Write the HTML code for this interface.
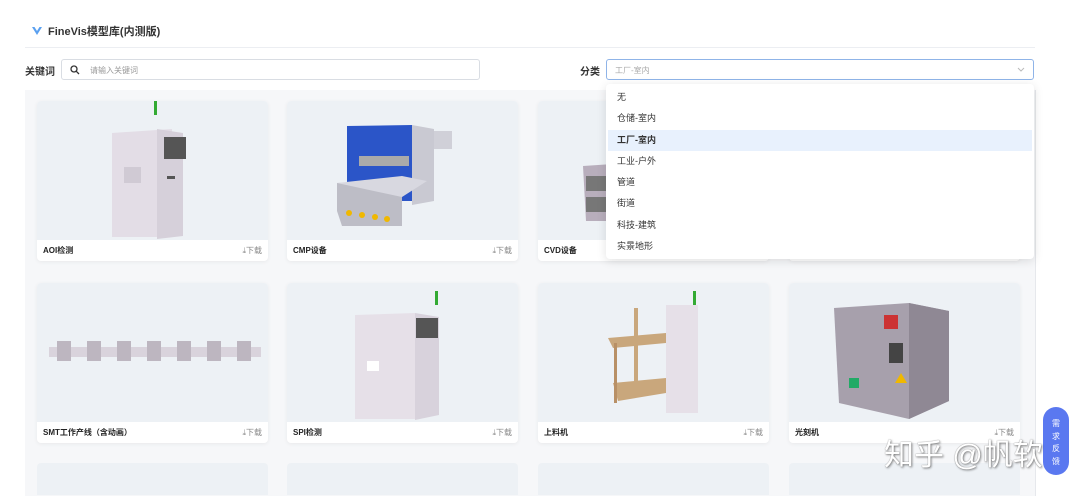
<!DOCTYPE html>
<html style="width:1080px;height:496px;overflow:hidden"><head><meta charset="utf-8">
<style>
*{margin:0;padding:0;box-sizing:border-box}
body{width:1080px;height:496px;overflow:hidden;background:#fff;font-family:"Liberation Sans","Noto Sans CJK SC",sans-serif;color:#222;position:relative}
.abs{position:absolute}
.hdr{left:32px;top:23px;font-size:11px;font-weight:bold;color:#333;display:flex;align-items:center;gap:6px}
.line{left:25px;top:47px;width:1010px;height:1px;background:#eceef2}
.lbl{font-size:10px;font-weight:bold;color:#333}
.inp{border:1px solid #d9dde3;border-radius:3px;height:21px;background:#fff}
.area{left:25px;top:90px;width:1010px;height:406px;background:#f6f7f9}
.vline{left:1035px;top:90px;width:1px;height:406px;background:#e6e8ec}
.card{position:absolute;width:231px;border-radius:4px;background:#fff;overflow:hidden;box-shadow:0 1px 4px rgba(0,0,0,.06)}
.img{height:139px;background:#edf1f5;position:relative}
.cap{height:21px;display:flex;align-items:center;justify-content:space-between;padding:0 6px;font-size:8px;font-weight:bold;color:#222}
.cap span{font-weight:normal;color:#888;font-size:8px}
.dd{left:606px;top:84px;width:428px;height:175px;background:#fff;border-radius:4px;box-shadow:0 2px 10px rgba(0,0,0,.12);padding-top:3px}
.dd div{height:21.3px;line-height:21.3px;padding-left:11px;font-size:9px;color:#333}
.dd .on{background:#e8f1fd;font-weight:bold;margin:0 2px;padding-left:9px}
.fb{left:1043px;top:407px;width:26px;height:68px;border-radius:13px;background:#5a78f0;color:#fff;font-size:8px;line-height:12.5px;text-align:center;padding-top:11px}
.wm{left:884px;top:430px;font-size:30px;color:#fff;text-shadow:1px 1px 2px rgba(0,0,0,.45),0 0 1px #777;letter-spacing:0}
.r3{position:absolute;top:463px;width:231px;height:32px;border-radius:4px 4px 0 0;background:#edf1f5}
</style></head><body>
<div class="abs hdr"><svg width="10" height="9" viewBox="0 0 10 9"><path d="M0 0L5 8L10 0L7.5 0L5 4L2.5 0Z" fill="#5aa0f0"/></svg>FineVis模型库(内测版)</div>
<div class="abs line"></div>
<div class="abs lbl" style="left:25px;top:63px">关键词</div>
<div class="abs inp" style="left:61px;top:59px;width:419px"><svg style="position:absolute;left:8px;top:5px" width="10" height="10" viewBox="0 0 10 10"><circle cx="4" cy="4" r="3" fill="none" stroke="#333" stroke-width="1.3"/><path d="M6.3 6.3L9 9" stroke="#333" stroke-width="1.3"/></svg><span style="position:absolute;left:28px;top:5px;font-size:8px;color:#999">请输入关键词</span></div>
<div class="abs lbl" style="left:580px;top:63px">分类</div>
<div class="abs inp" style="left:606px;top:59px;width:428px;border-color:#8fb4e8"><span style="position:absolute;left:8px;top:5px;font-size:8px;color:#aaa">工厂-室内</span><svg style="position:absolute;right:8px;top:7px" width="8" height="6" viewBox="0 0 8 6"><path d="M1 1L4 4L7 1" fill="none" stroke="#bbb"/></svg></div>
<div class="abs area"></div>
<div class="abs vline"></div>

<div class="card" style="left:37px;top:101px"><div class="img">
<svg width="231" height="139"><rect x="117" y="0" width="3" height="14" fill="#3a3"/><path d="M75 32L135 28L135 136L75 136Z" fill="#e3dde6"/><path d="M120 28L146 32L146 135L120 138Z" fill="#d6d0da"/><rect x="127" y="36" width="22" height="22" fill="#555"/><rect x="87" y="66" width="17" height="16" fill="#d0cad4"/><rect x="130" y="75" width="8" height="3" fill="#555"/></svg></div><div class="cap">AOI检测<span>⤓下载</span></div></div>
<div class="card" style="left:287px;top:101px"><div class="img">
<svg width="231" height="139"><path d="M60 25L125 24L125 100L60 100Z" fill="#2b55c8"/><path d="M125 24L147 28L147 100L125 104Z" fill="#c9c9d2"/><rect x="147" y="30" width="18" height="18" fill="#d0d0d8"/><rect x="72" y="55" width="50" height="10" fill="#aaa"/><path d="M50 82L110 80L115 96L115 125L55 125L50 110Z" fill="#bdbdc6"/><path d="M50 82L115 75L140 80L115 96Z" fill="#d8d8e0"/><circle cx="62" cy="112" r="3" fill="#f0b800"/><circle cx="75" cy="114" r="3" fill="#f0b800"/><circle cx="88" cy="116" r="3" fill="#f0b800"/><circle cx="100" cy="118" r="3" fill="#f0b800"/></svg></div><div class="cap">CMP设备<span>⤓下载</span></div></div>
<div class="card" style="left:538px;top:101px"><div class="img">
<svg width="231" height="139"><path d="M45 65L90 62L90 120L48 120Z" fill="#b8aebc"/><rect x="48" y="75" width="20" height="15" fill="#777"/><rect x="48" y="96" width="20" height="15" fill="#777"/></svg></div><div class="cap">CVD设备<span>⤓下载</span></div></div>
<div class="card" style="left:789px;top:101px"><div class="img"></div><div class="cap"> <span>⤓下载</span></div></div>

<div class="card" style="left:37px;top:283px"><div class="img">
<svg width="231" height="139"><rect x="12" y="64" width="212" height="10" fill="#d9d3dc"/><g fill="#bdb6c0"><rect x="20" y="58" width="14" height="20"/><rect x="50" y="58" width="14" height="20"/><rect x="80" y="58" width="14" height="20"/><rect x="110" y="58" width="14" height="20"/><rect x="140" y="58" width="14" height="20"/><rect x="170" y="58" width="14" height="20"/><rect x="200" y="58" width="14" height="20"/></g></svg></div><div class="cap">SMT工作产线（含动画）<span>⤓下载</span></div></div>
<div class="card" style="left:287px;top:283px"><div class="img">
<svg width="231" height="139"><rect x="148" y="8" width="3" height="14" fill="#3a3"/><path d="M68 32L128 30L128 136L68 136Z" fill="#e6e0e8"/><path d="M128 30L152 34L152 132L128 137Z" fill="#d8d2dc"/><rect x="129" y="35" width="22" height="20" fill="#555"/><rect x="80" y="78" width="12" height="10" fill="#fff"/></svg></div><div class="cap">SPI检测<span>⤓下载</span></div></div>
<div class="card" style="left:538px;top:283px"><div class="img">
<svg width="231" height="139"><rect x="155" y="8" width="3" height="14" fill="#3a3"/><rect x="128" y="22" width="32" height="108" fill="#e6e0e8"/><path d="M70 55L128 50L128 60L75 65Z" fill="#c9a77c"/><path d="M75 100L128 95L128 110L80 118Z" fill="#c9a77c"/><rect x="76" y="60" width="3" height="60" fill="#b89066"/><rect x="96" y="25" width="4" height="75" fill="#c9a77c"/></svg></div><div class="cap">上料机<span>⤓下载</span></div></div>
<div class="card" style="left:789px;top:283px"><div class="img">
<svg width="231" height="139"><path d="M45 25L120 20L160 28L160 118L120 136L50 120Z" fill="#a7a0ac"/><path d="M120 20L160 28L160 118L120 136Z" fill="#8f8894"/><rect x="95" y="32" width="14" height="14" fill="#c33"/><rect x="100" y="60" width="14" height="20" fill="#444"/><path d="M112 90L118 100L106 100Z" fill="#f0b800"/><rect x="60" y="95" width="10" height="10" fill="#2a6"/></svg></div><div class="cap">光刻机<span>⤓下载</span></div></div>

<div class="r3" style="left:37px"></div>
<div class="r3" style="left:287px"></div>
<div class="r3" style="left:538px"></div>
<div class="r3" style="left:789px"></div>

<div class="abs dd">
<div>无</div><div>仓储-室内</div><div class="on">工厂-室内</div><div>工业-户外</div><div>管道</div><div>街道</div><div>科技-建筑</div><div>实景地形</div>
</div>
<div class="abs fb">需<br>求<br>反<br>馈</div>
<div class="abs wm">知乎 @帆软</div>
</body></html>
